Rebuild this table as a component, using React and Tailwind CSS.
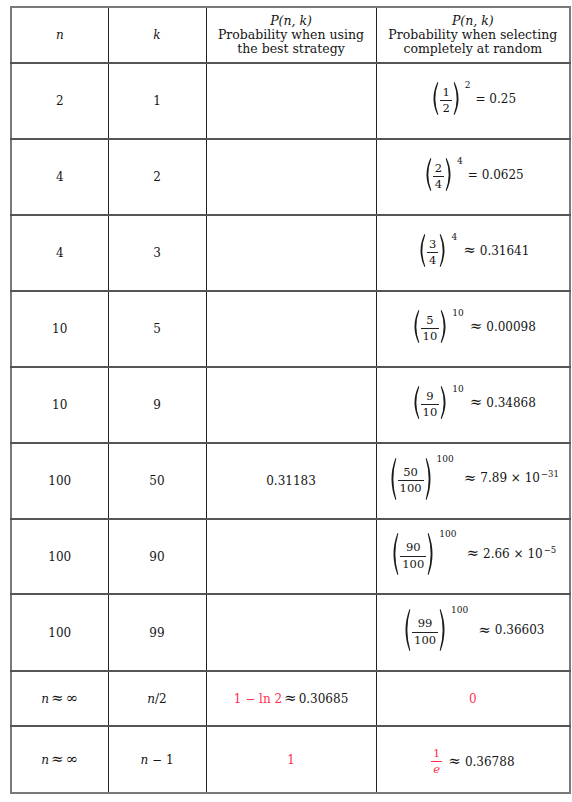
const serif = { fontFamily: '"DejaVu Serif", "Liberation Serif", serif' };

function Approx() {
  return <span className="text-[15px] leading-none mx-[2px] align-[-1px]">≈</span>;
}

function Paren({ right, tall }) {
  const h = tall ? 42 : 33;
  return (
    <svg width="10" height={h} viewBox={`0 0 10 ${h}`} className={right ? "-scale-x-100" : ""}>
      <path d={`M8.5 0 Q0.5 ${h / 2} 8.5 ${h} L9.3 ${h - 0.5} Q3.4 ${h / 2} 9.3 0.5 Z`} fill="#1a1a1a" />
    </svg>
  );
}

function Frac({ n, d, red }) {
  return (
    <span className={`inline-flex flex-col items-center leading-none text-[11.5px] ${red ? "text-[#ff3050]" : ""}`}>
      <span className="px-[2px]">{n}</span>
      <span className={`h-px w-full my-[2px] ${red ? "bg-[#ff3050]" : "bg-[#222]"}`} />
      <span className="px-[2px]">{d}</span>
    </span>
  );
}

function Pow({ n, d, e, tall }) {
  return (
    <span className="inline-flex items-center">
      <Paren tall={tall} />
      <span className="mx-[1px]">
        <Frac n={n} d={d} />
      </span>
      <Paren right tall={tall} />
      <span className={`self-start text-[9px] leading-none ml-[2px] ${tall ? "-mt-[3px]" : "-mt-[1px]"}`}>{e}</span>
    </span>
  );
}

function Sci({ m, p }) {
  return (
    <span className="inline-flex items-center">
      <Approx />
      <span className="ml-[2px]">{m} × 10</span>
      <span className="self-start text-[8.5px] leading-none mt-[1px] ml-[1px]">{p}</span>
    </span>
  );
}

const eq = (s) => <span className="ml-[5px]">= {s}</span>;
const ap = (s, ml = "ml-[4px]") => (
  <span className={`${ml} inline-flex items-center`}>
    <Approx />
    <span className="ml-[2px]">{s}</span>
  </span>
);

const rows = [
  { n: "2", k: "1", best: "", rand: <><Pow n="1" d="2" e="2" />{eq("0.25")}</>, h: "h-[76px]" },
  { n: "4", k: "2", best: "", rand: <><Pow n="2" d="4" e="4" />{eq("0.0625")}</>, h: "h-[76px]" },
  { n: "4", k: "3", best: "", rand: <><Pow n="3" d="4" e="4" />{ap("0.31641")}</>, h: "h-[76px]" },
  { n: "10", k: "5", best: "", rand: <><Pow n="5" d="10" e="10" />{ap("0.00098")}</>, h: "h-[76px]" },
  { n: "10", k: "9", best: "", rand: <><Pow n="9" d="10" e="10" />{ap("0.34868")}</>, h: "h-[76px]" },
  { n: "100", k: "50", best: "0.31183", rand: <><Pow n="50" d="100" e="100" tall /><span className="ml-[8px]"><Sci m="7.89" p="−31" /></span></>, h: "h-[76px]" },
  { n: "100", k: "90", best: "", rand: <><Pow n="90" d="100" e="100" tall /><span className="ml-[8px]"><Sci m="2.66" p="−5" /></span></>, h: "h-[75px]" },
  { n: "100", k: "99", best: "", rand: <><Pow n="99" d="100" e="100" tall />{ap("0.36603", "ml-[8px]")}</>, h: "h-[77px]" },
];

const cell = "border-t-2 border-t-[#555] border-l border-l-[#222]";

export default function App() {
  return (
    <div className="w-[572px] h-[802px] bg-white pt-[6px] pl-[10px] text-[#151515]" style={serif}>
      <table className="border-collapse border-2 border-[#7a7a7a] text-[12px] text-center table-fixed w-[559px]">
        <colgroup>
          <col className="w-[97px]" />
          <col className="w-[98px]" />
          <col className="w-[170px]" />
          <col className="w-[194px]" />
        </colgroup>
        <thead>
          <tr className="h-[56px]">
            <th className="font-normal italic border-l border-[#222]">n</th>
            <th className="font-normal italic border-l border-[#222]">k</th>
            <th className="font-normal border-l border-[#222] leading-[14px] text-[12.5px]">
              <div className="italic">P(n, k)</div>
              <div>Probability when using</div>
              <div>the best strategy</div>
            </th>
            <th className="font-normal border-l border-[#222] leading-[14px] text-[12.5px]">
              <div className="italic">P(n, k)</div>
              <div className="whitespace-nowrap">Probability when selecting</div>
              <div>completely at random</div>
            </th>
          </tr>
        </thead>
        <tbody>
          {rows.map((r, i) => (
            <tr key={i} className={r.h}>
              <td className={cell}>{r.n}</td>
              <td className={cell}>{r.k}</td>
              <td className={cell}>{r.best}</td>
              <td className={cell}>
                <span className="inline-flex items-center">{r.rand}</span>
              </td>
            </tr>
          ))}
          <tr className="h-[55px]">
            <td className={cell}>
              <span className="inline-flex items-center"><i>n</i><Approx /><span className="text-[15px] leading-none">∞</span></span>
            </td>
            <td className={cell}><i>n</i>/2</td>
            <td className={cell}>
              <span className="inline-flex items-center">
                <span className="text-[#ff3050]">1 − ln 2</span>
                <Approx />
                <span>0.30685</span>
              </span>
            </td>
            <td className={`${cell} text-[#ff3050]`}>0</td>
          </tr>
          <tr className="h-[67px]">
            <td className={cell}>
              <span className="inline-flex items-center"><i>n</i><Approx /><span className="text-[15px] leading-none">∞</span></span>
            </td>
            <td className={cell}><i>n</i> − 1</td>
            <td className={`${cell} text-[#ff3050]`}>1</td>
            <td className={cell}>
              <span className="inline-flex items-center">
                <Frac n="1" d={<i>e</i>} red />
                {ap("0.36788")}
              </span>
            </td>
          </tr>
        </tbody>
      </table>
    </div>
  );
}
